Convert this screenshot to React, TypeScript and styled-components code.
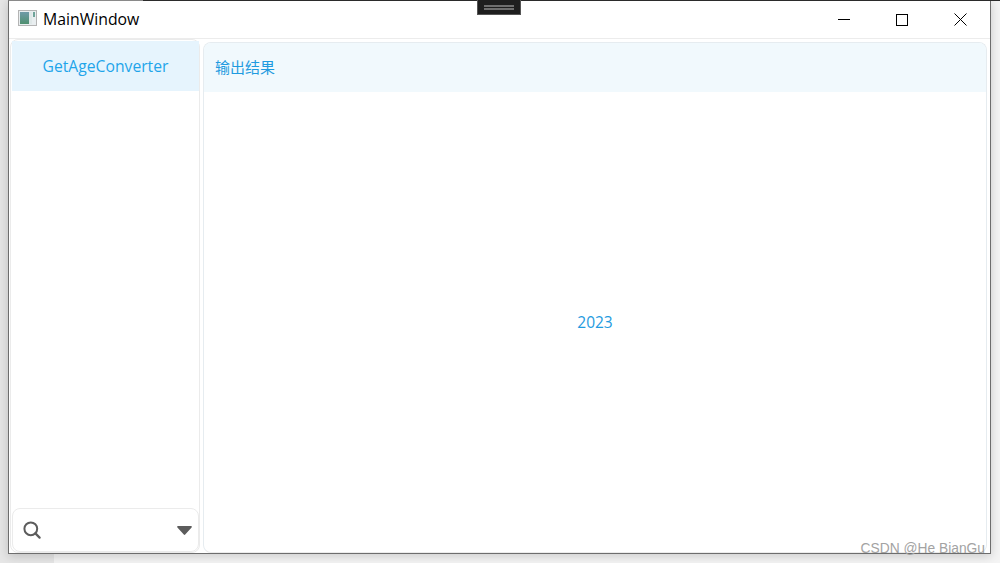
import React from 'react'
import styled, { createGlobalStyle } from 'styled-components'

const GlobalStyle = createGlobalStyle`
  html, body {
    margin: 0;
    padding: 0;
    background: #fdfdfd;
    overflow: hidden;
  }
`

const Page = styled.div`
  position: relative;
  width: 1000px;
  height: 563px;
  padding-left: 8px;
  box-sizing: border-box;
  background: linear-gradient(to right, #e6e6e6 0, #e6e6e6 54px, #f4f4f4 54px);
  font-family: "Microsoft YaHei", "Noto Sans CJK SC", "Open Sans", sans-serif;
`

const TopEdge = styled.div`
  position: absolute;
  top: 0;
  left: 143px;
  right: 0;
  height: 1px;
  background: #2b2b2b;
`

const Handle = styled.div`
  position: absolute;
  top: 0;
  left: 477px;
  width: 44px;
  height: 15px;
  box-sizing: border-box;
  background: #1e1e1e;
  border: 1px solid #555;
  border-top: 0;
  display: flex;
  flex-direction: column;
  justify-content: center;
  align-items: center;
  gap: 1px;
`

const HandleLine = styled.span`
  width: 30px;
  height: 2px;
  background: #6e6e6e;
`

const Window = styled.div`
  width: 983px;
  height: 554px;
  box-sizing: border-box;
  background: #fff;
  border: 1px solid #6d6d6d;
  border-top-color: #8a8a8a;
  box-shadow: 0 2px 10px rgba(0, 0, 0, 0.18);
  display: flex;
  flex-direction: column;
`

const TitleBar = styled.div`
  height: 37px;
  flex: none;
  display: flex;
  align-items: center;
  padding-left: 9px;
  border-bottom: 1px solid #ececec;
`

const AppIcon = styled.svg`
  width: 20px;
  height: 17px;
  margin: 0 5px 2px 0;
  flex: none;
`

const Title = styled.span`
  font-family: "Open Sans", "Liberation Sans", sans-serif;
  font-size: 15.8px;
  color: #000;
  flex: 1;
  padding-bottom: 2px;
`

const CaptionButton = styled.div`
  width: 58.5px;
  height: 37px;
  display: flex;
  align-items: center;
  justify-content: center;
`

const Body = styled.div`
  flex: 1;
  min-height: 0;
  display: flex;
  padding: 0 3px 0 1px;
`

const Sidebar = styled.div`
  width: 190px;
  flex: none;
  box-sizing: border-box;
  border: 1px solid #ebebeb;
  border-radius: 8px;
  display: flex;
  flex-direction: column;
  padding-top: 1px;
`

const MenuItem = styled.div`
  height: 50px;
  margin-left: 1px;
  background: #e6f4fd;
  color: #1fa5ea;
  font-family: "Open Sans", sans-serif;
  font-size: 15.7px;
  display: flex;
  align-items: center;
  justify-content: center;
  padding-bottom: 1px;
  box-sizing: border-box;
`

const SearchBox = styled.div`
  margin-top: auto;
  margin-left: 1px;
  height: 44px;
  box-sizing: border-box;
  border: 1px solid #ebebeb;
  border-radius: 8px;
  display: flex;
  align-items: center;
  justify-content: space-between;
  padding: 0 6px 0 10px;
`

const SearchIcon = styled.svg`
  width: 18px;
  height: 18px;
  flex: none;
`

const Arrow = styled.svg`
  width: 15px;
  height: 9px;
  flex: none;
`

const Panel = styled.div`
  flex: 1;
  margin: 3px 0 0 3px;
  box-sizing: border-box;
  border: 1px solid #e6ecf0;
  border-bottom-color: #ebebeb;
  border-radius: 8px;
  overflow: hidden;
  display: flex;
  flex-direction: column;
`

const PanelHeader = styled.div`
  height: 49px;
  flex: none;
  background: #f1f9fd;
  color: #1f9be0;
  font-size: 15px;
  display: flex;
  align-items: center;
  padding: 0 0 2px 11px;
  box-sizing: border-box;
`

const PanelBody = styled.div`
  flex: 1;
  display: flex;
  align-items: center;
  justify-content: center;
  color: #1f9be0;
  font-family: "Open Sans", sans-serif;
  font-size: 15.5px;
`

const Watermark = styled.div`
  position: absolute;
  right: 15px;
  bottom: 7px;
  font-family: "Liberation Sans", sans-serif;
  font-size: 13.8px;
  color: #a3a3a3;
`

const App = () => {
  return (
    <Page>
      <GlobalStyle />
      <Window>
        <TitleBar>
          <AppIcon viewBox="0 0 20 17">
            <defs>
              <linearGradient id="appFill" x1="0" y1="0" x2="0" y2="1">
                <stop offset="0" stopColor="#6f9aa8" />
                <stop offset="1" stopColor="#4f9070" />
              </linearGradient>
            </defs>
            <rect x="0.5" y="0.5" width="18" height="15" fill="#e9eef0" stroke="#b4b4b4" />
            <rect x="2" y="2" width="9" height="12" fill="url(#appFill)" />
            <rect x="11" y="2" width="3" height="12" fill="#dfe8e8" />
            <rect x="15" y="2" width="2" height="5" fill="#6fa49a" />
          </AppIcon>
          <Title>MainWindow</Title>
          <CaptionButton>
            <svg width="12" height="12" viewBox="0 0 12 12">
              <path d="M0 5.5H12" stroke="#000" fill="none" />
            </svg>
          </CaptionButton>
          <CaptionButton>
            <svg width="12" height="12" viewBox="0 0 12 12">
              <rect x="0.5" y="0.5" width="11" height="11" stroke="#000" fill="none" />
            </svg>
          </CaptionButton>
          <CaptionButton>
            <svg width="13" height="13" viewBox="0 0 13 13">
              <path d="M0.5 0.5L12.5 12.5M12.5 0.5L0.5 12.5" stroke="#000" fill="none" />
            </svg>
          </CaptionButton>
        </TitleBar>
        <Body>
          <Sidebar>
            <MenuItem>GetAgeConverter</MenuItem>
            <SearchBox>
              <SearchIcon viewBox="0 0 18 18">
                <circle cx="7.8" cy="7.8" r="6.4" fill="none" stroke="#5c5c5c" strokeWidth="2" />
                <path d="M12.4 12.4L16.6 16.6" stroke="#5c5c5c" strokeWidth="2.2" strokeLinecap="round" />
              </SearchIcon>
              <Arrow viewBox="0 0 15 9">
                <path d="M1 0H14C14.8 0 15.2 0.8 14.6 1.4L8.2 8.6C7.8 9 7.2 9 6.8 8.6L0.4 1.4C-0.2 0.8 0.2 0 1 0Z" fill="#5c5c5c" />
              </Arrow>
            </SearchBox>
          </Sidebar>
          <Panel>
            <PanelHeader>输出结果</PanelHeader>
            <PanelBody>2023</PanelBody>
          </Panel>
        </Body>
      </Window>
      <TopEdge />
      <Handle>
        <HandleLine />
        <HandleLine />
      </Handle>
      <Watermark>CSDN @He BianGu</Watermark>
    </Page>
  )
}

export default App
